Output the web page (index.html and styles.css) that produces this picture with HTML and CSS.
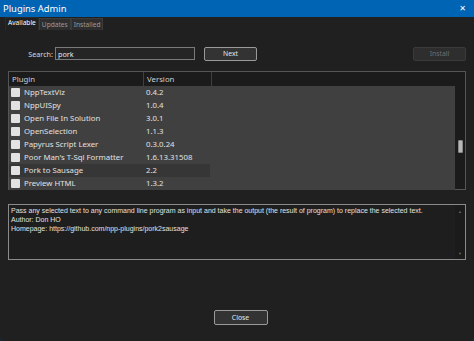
FILE: index.html
```html
<!DOCTYPE html>
<html lang="en">
<head>
  <meta charset="UTF-8">
  <title>Plugins Admin</title>
  <link rel="stylesheet" href="styles.css">
</head>
<body>
  <div class="dialog">
    <div class="titlebar">
      <span class="title">Plugins Admin</span>
      <span class="close-x">&#x2715;</span>
    </div>

    <div class="tabs">
      <span class="tab active">Available</span>
      <span class="tab">Updates</span>
      <span class="tab">Installed</span>
    </div>

    <div class="content">
      <div class="search-row">
        <label class="search-label" for="search">Search:</label>
        <input class="search-input" id="search" type="text" value="pork">
        <button class="btn next-btn">Next</button>
        <button class="btn install-btn" disabled>Install</button>
      </div>

      <div class="list">
        <div class="list-main">
          <div class="list-head">
            <div class="col col-name">Plugin</div>
            <div class="col col-ver">Version</div>
            <div class="col col-rest"></div>
          </div>
          <div class="list-body">
            <div class="row"><div class="col col-name"><span class="check"></span>NppTextViz</div><div class="col col-ver">0.4.2</div></div>
            <div class="row"><div class="col col-name"><span class="check"></span>NppUISpy</div><div class="col col-ver">1.0.4</div></div>
            <div class="row"><div class="col col-name"><span class="check"></span>Open File In Solution</div><div class="col col-ver">3.0.1</div></div>
            <div class="row"><div class="col col-name"><span class="check"></span>OpenSelection</div><div class="col col-ver">1.1.3</div></div>
            <div class="row"><div class="col col-name"><span class="check"></span>Papyrus Script Lexer</div><div class="col col-ver">0.3.0.24</div></div>
            <div class="row"><div class="col col-name"><span class="check"></span>Poor Man's T-Sql Formatter</div><div class="col col-ver">1.6.13.31508</div></div>
            <div class="row selected"><div class="col col-name"><span class="check"></span>Pork to Sausage</div><div class="col col-ver">2.2</div></div>
            <div class="row"><div class="col col-name"><span class="check"></span>Preview HTML</div><div class="col col-ver">1.3.2</div></div>
          </div>
        </div>
        <div class="vscroll">
          <span class="thumb"></span>
        </div>
      </div>

      <div class="desc">
        <div class="desc-text">
          Pass any selected text to any command line program as input and take the output (the result of program) to replace the selected text.<br>
          Author: Don HO<br>
          Homepage: https://github.com/npp-plugins/pork2sausage
        </div>
        <div class="desc-scroll">
          <span class="arrow">&#x25B2;</span>
          <span class="arrow">&#x25BC;</span>
        </div>
      </div>

      <div class="footer">
        <button class="btn close-btn">Close</button>
      </div>
    </div>
  </div>
</body>
</html>
```

FILE: styles.css
```css
body {
  margin: 0;
  background-color: #1b2630;
  font-family: 'Noto Sans', 'Open Sans', sans-serif;
  width: 474px;
  height: 341px;
  overflow: hidden;
}

.dialog {
  height: 341px;
  background-color: #202020;
  border-radius: 0 0 6px 6px;
  display: flex;
  flex-direction: column;
}

.titlebar {
  height: 17px;
  background-color: #0064b4;
  display: flex;
  align-items: center;
  justify-content: space-between;
  padding: 0 8px 0 3px;
  color: #fff;
}

.title {
  font-size: 9.4px;
}

.close-x {
  font-size: 8px;
  font-family: 'DejaVu Sans', sans-serif;
}

.tabs {
  display: flex;
  margin: 1px 0 0 5px;
  height: 12px;
}

.tab {
  font-size: 6.6px;
  line-height: 11px;
  padding: 0 2px;
  color: #9a9a9a;
  background-color: #2e2e2e;
  border: 1px solid #3c3c3c;
  border-bottom: none;
}

.tab.active {
  color: #fff;
  background-color: #202020;
  border-color: #2a2a2a;
  line-height: 10px;
  margin-top: -1px;
}

.content {
  flex: 1;
  padding: 0 8px;
  display: flex;
  flex-direction: column;
}

.search-row {
  display: flex;
  align-items: center;
  margin-top: 16px;
  height: 15px;
}

.search-label {
  width: 45px;
  text-align: right;
  padding-right: 2px;
  font-size: 7.2px;
  color: #d8d8d8;
}

.search-input {
  width: 140px;
  height: 13px;
  box-sizing: border-box;
  background-color: #252525;
  border: 1px solid #7a7a7a;
  color: #e8e8e8;
  font-family: inherit;
  font-size: 7.2px;
  padding: 0 2px;
  margin: 0;
}

.btn {
  font-family: inherit;
  font-size: 6.8px;
  height: 14px;
  padding: 0;
  border-radius: 2px;
  background-color: #333;
  border: 1px solid #9a9a9a;
  color: #e8e8e8;
}

.next-btn {
  width: 53px;
  margin-left: 9px;
}

.install-btn {
  width: 53px;
  margin-left: auto;
  margin-right: 0;
  border-color: #3a3a3a;
  background-color: #2e2e2e;
  color: #6e6e6e;
}

.list {
  margin-top: 10px;
  height: 119px;
  border: 1px solid #555;
  box-sizing: border-box;
  display: flex;
  background-color: #1b1b1b;
}

.list-main {
  flex: 1;
  display: flex;
  flex-direction: column;
}

.list-head {
  display: flex;
  height: 15px;
  background-color: #1b1b1b;
  color: #cfcfcf;
  font-size: 7.8px;
  line-height: 14px;
}

.list-head .col {
  border-right: 1px solid #3f3f3f;
  padding-left: 3px;
}

.list-head .col-rest {
  flex: 1;
  border-right: none;
}

.col-name {
  width: 131px;
}

.col-ver {
  width: 64px;
}

.list-body {
  flex: 1;
  background-color: #404040;
}

.row {
  display: flex;
  height: 13px;
  font-size: 7.8px;
  line-height: 13px;
  color: #e0e0e0;
}

.row .col-name {
  display: flex;
  align-items: center;
  padding-left: 2px;
  width: 132px;
}

.row .col-ver {
  padding-left: 3px;
}

.row.selected .col-name,
.row.selected .col-ver {
  background-color: #363636;
}

.check {
  width: 9px;
  height: 9px;
  background-color: #e2e2e2;
  border-radius: 1px;
  margin-right: 4px;
}

.vscroll {
  width: 10px;
  background-color: #1b1b1b;
  position: relative;
}

.thumb {
  position: absolute;
  left: 3px;
  top: 68px;
  width: 3px;
  height: 11px;
  background-color: #b8b8b8;
  border: 1px solid #888;
  border-radius: 1px;
}

.desc {
  margin-top: 14px;
  height: 56px;
  border: 1px solid #8a8a8a;
  box-sizing: border-box;
  background-color: #1e1e1e;
  display: flex;
}

.desc-text {
  flex: 1;
  font-family: 'Liberation Sans', Arial, sans-serif;
  font-size: 7px;
  line-height: 9px;
  color: #e0e0e0;
  padding: 1px 2px;
}

.desc-scroll {
  width: 10px;
  background-color: #1b1b1b;
  display: flex;
  flex-direction: column;
  justify-content: space-between;
  align-items: center;
  font-size: 4px;
  color: #666;
  padding: 4px 0 3px;
}

.footer {
  display: flex;
  justify-content: center;
  margin-top: 50px;
}

.close-btn {
  width: 54px;
  height: 15px;
  margin-left: 7px;
}
```
